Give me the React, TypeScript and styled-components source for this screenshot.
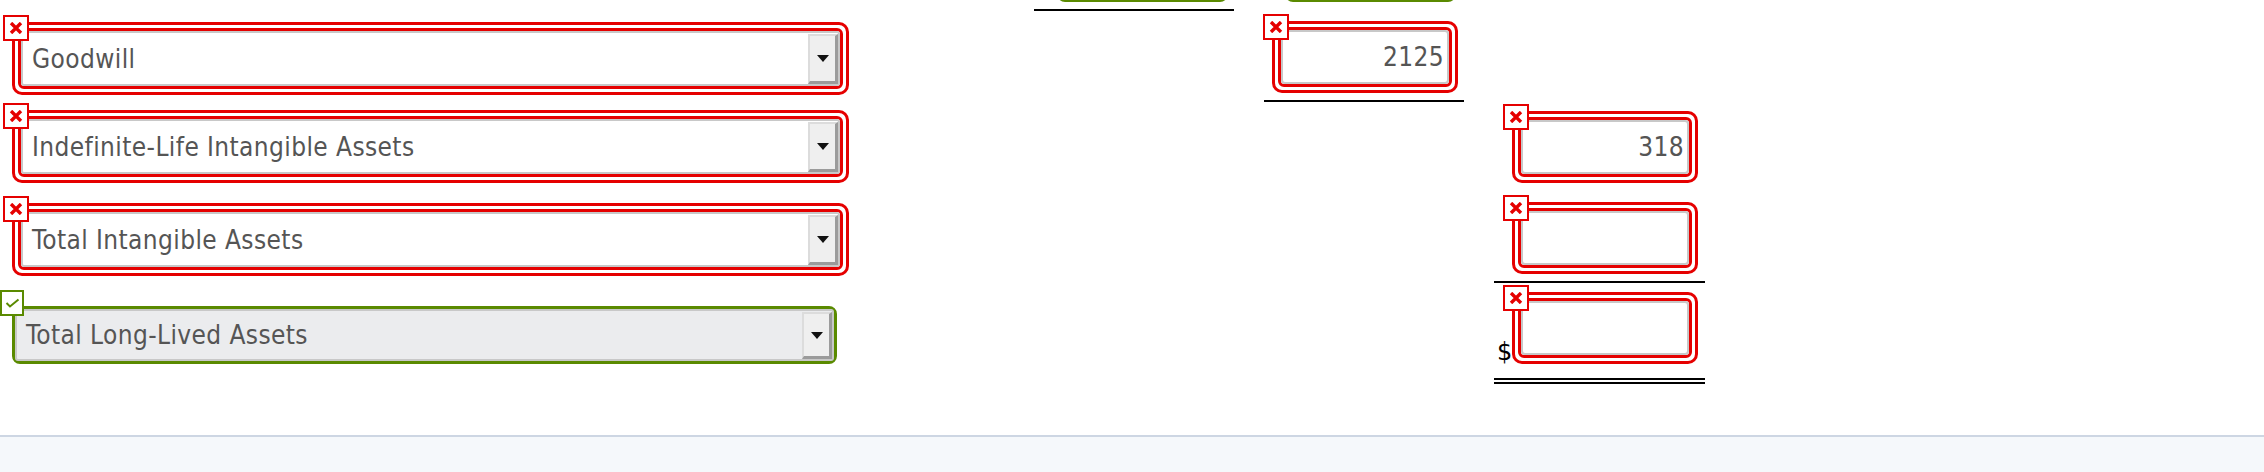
import React from 'react'
import styled, { createGlobalStyle } from 'styled-components'

const RED = '#e50000'
const GREEN = '#5a8a00'

const GlobalStyle = createGlobalStyle`
  *, *::before, *::after { box-sizing: border-box; }
  html, body { margin: 0; padding: 0; background: #fff; }
  body {
    font-family: "DejaVu Sans Condensed", "DejaVu Sans", Verdana, sans-serif;
    font-stretch: condensed;
    overflow: hidden;
  }
`

const Page = styled.div`
  width: 2264px;
  height: 472px;
  overflow: hidden;
  display: flex;
  flex-direction: column;
`

const Sheet = styled.div`
  margin-top: -80px;
  display: flex;
  flex-direction: column;
`

const Row = styled.div<{ $h: number }>`
  display: grid;
  grid-template-columns: 1004px 200px 200px 211px;
  column-gap: 30px;
  height: ${p => p.$h}px;
`

type Rule = 'single' | 'double' | undefined

const Cell = styled.div<{ $pb?: number; $pl?: number; $rule?: Rule }>`
  display: flex;
  align-items: flex-end;
  padding-left: ${p => p.$pl ?? 0}px;
  padding-bottom: ${p => p.$pb ?? 7}px;
  border-bottom: ${p =>
    p.$rule === 'single' ? '2px solid #000' : p.$rule === 'double' ? '6px double #000' : 'none'};
`

const Field = styled.div<{ $indent?: number }>`
  position: relative;
  display: inline-flex;
  margin-left: ${p => p.$indent ?? 0}px;
`

const WrongOuter = styled.div`
  border: 3px solid ${RED};
  border-radius: 10px;
  padding: 3px;
  background: #fff;
`

const WrongInner = styled.div`
  border: 3px solid ${RED};
  border-radius: 6px;
`

const RightOuter = styled.div`
  border: 3px solid ${GREEN};
  border-radius: 8px;
`

const Badge = styled.span<{ $ok?: boolean }>`
  position: absolute;
  z-index: 1;
  left: ${p => (p.$ok ? -12 : -9)}px;
  top: ${p => (p.$ok ? -16 : -7)}px;
  width: ${p => (p.$ok ? 24 : 26)}px;
  height: 26px;
  border: 2px solid ${p => (p.$ok ? GREEN : RED)};
  background: #fff;
  display: flex;
  align-items: center;
  justify-content: center;
`

const Select = styled.div<{ $locked?: boolean }>`
  width: 819px;
  height: ${p => (p.$locked ? 52 : 55)}px;
  display: flex;
  align-items: stretch;
  border: 2px solid #c8c8c8;
  border-radius: 3px;
  background: ${p => (p.$locked ? '#ebecee' : '#fff')};
`

const SelectText = styled.span`
  flex: 1;
  display: flex;
  align-items: center;
  padding-left: 9px;
  font-size: 26px;
  letter-spacing: 0.4px;
  color: #555;
  white-space: nowrap;
`

const SelectButton = styled.span`
  width: 30px;
  margin-top: 1px;
  background: #efefef;
  border-style: solid;
  border-width: 2px 3px 3px 2px;
  border-color: #dcdcdc #9b9b9b #9b9b9b #dcdcdc;
  display: flex;
  align-items: center;
  justify-content: center;
`

const Caret = styled.span`
  width: 0;
  height: 0;
  border-left: 6px solid transparent;
  border-right: 6px solid transparent;
  border-top: 7px solid #111;
`

const NumberBox = styled.div<{ $w: number; $locked?: boolean }>`
  width: ${p => p.$w}px;
  height: 54px;
  border: 2px solid #c8c8c8;
  border-radius: 4px;
  display: flex;
  align-items: center;
  justify-content: flex-end;
  padding-right: 3px;
  font-size: 26px;
  letter-spacing: 0.4px;
  color: #555;
  background: ${p => (p.$locked ? '#ebecee' : '#fff')};
`

const Dollar = styled.span`
  width: 15px;
  margin-left: -1px;
  align-self: flex-end;
  font-family: "DejaVu Sans", Verdana, sans-serif;
  font-stretch: normal;
  font-size: 24px;
  line-height: 1;
  color: #000;
`

const Footer = styled.div`
  margin-top: auto;
  height: 37px;
  border-top: 2px solid #cdd6e3;
  background: #f5f8fb;
`

const Cross = () => (
  <svg width="14" height="12" viewBox="0 0 14 12">
    <path d="M2 1 L12 11 M12 1 L2 11" stroke={RED} strokeWidth="3.4" fill="none" />
  </svg>
)

const Check = () => (
  <svg width="15" height="10" viewBox="0 0 15 10">
    <path d="M1.5 5 L5 8.5 L13.5 1.5" stroke={GREEN} strokeWidth="2" fill="none" />
  </svg>
)

const Dropdown = ({ label, ok }: { label: string; ok?: boolean }) => {
  const control = (
    <Select $locked={ok}>
      <SelectText>{label}</SelectText>
      <SelectButton>
        <Caret />
      </SelectButton>
    </Select>
  )
  return (
    <Field $indent={12}>
      <Badge $ok={ok}>{ok ? <Check /> : <Cross />}</Badge>
      {ok ? (
        <RightOuter>{control}</RightOuter>
      ) : (
        <WrongOuter>
          <WrongInner>{control}</WrongInner>
        </WrongOuter>
      )}
    </Field>
  )
}

const Amount = ({ value, ok }: { value?: string; ok?: boolean }) => (
  <Field>
    <Badge $ok={ok}>{ok ? <Check /> : <Cross />}</Badge>
    {ok ? (
      <RightOuter>
        <NumberBox $w={165} $locked>
          {value}
        </NumberBox>
      </RightOuter>
    ) : (
      <WrongOuter>
        <WrongInner>
          <NumberBox $w={168}>{value}</NumberBox>
        </WrongInner>
      </WrongOuter>
    )}
  </Field>
)

export default function App() {
  return (
    <Page>
      <GlobalStyle />
      <Sheet>
        <Row $h={91}>
          <Cell />
          <Cell $pl={23} $rule="single">
            <Amount ok />
          </Cell>
          <Cell $pl={21} $pb={9}>
            <Amount ok />
          </Cell>
          <Cell />
        </Row>

        <Row $h={91}>
          <Cell>
            <Dropdown label="Goodwill" />
          </Cell>
          <Cell />
          <Cell $pl={8} $rule="single">
            <Amount value="2125" />
          </Cell>
          <Cell />
        </Row>

        <Row $h={88}>
          <Cell>
            <Dropdown label="Indefinite-Life Intangible Assets" />
          </Cell>
          <Cell />
          <Cell />
          <Cell $pl={4}>
            <Dollar />
            <Amount value="318" />
          </Cell>
        </Row>

        <Row $h={93}>
          <Cell>
            <Dropdown label="Total Intangible Assets" />
          </Cell>
          <Cell />
          <Cell />
          <Cell $pl={4} $rule="single">
            <Dollar />
            <Amount />
          </Cell>
        </Row>

        <Row $h={101}>
          <Cell $pb={20}>
            <Dropdown label="Total Long-Lived Assets" ok />
          </Cell>
          <Cell />
          <Cell />
          <Cell $pl={4} $pb={14} $rule="double">
            <Dollar>$</Dollar>
            <Amount />
          </Cell>
        </Row>
      </Sheet>
      <Footer />
    </Page>
  )
}
